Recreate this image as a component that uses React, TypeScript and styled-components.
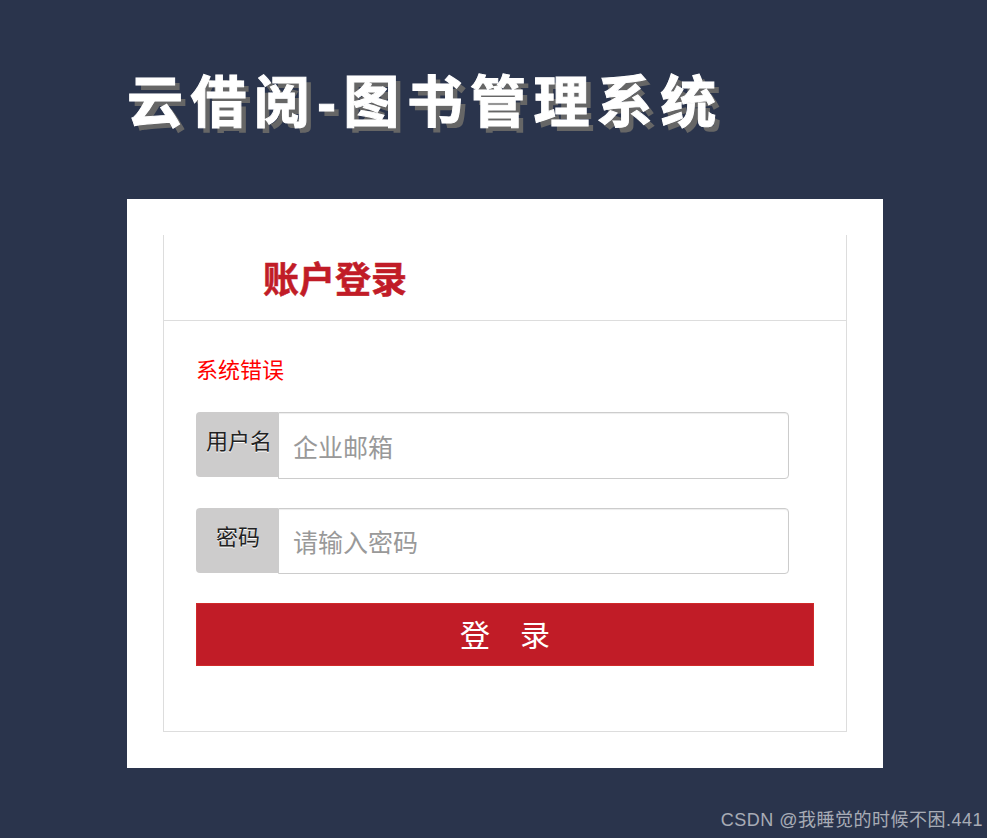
import React from "react";
import styled, { createGlobalStyle } from "styled-components";

const cjk = `"Liberation Sans", "Noto Sans CJK SC", sans-serif`;

const GlobalStyle = createGlobalStyle`
  html, body {
    margin: 0;
    padding: 0;
    background: #2a344c;
  }
  * {
    box-sizing: border-box;
  }
`;

const Page = styled.div`
  position: relative;
  width: 987px;
  height: 838px;
  padding: 68px 104px 0 127px;
  background: #2a344c;
  font-family: ${cjk};
  overflow: hidden;
`;

const Title = styled.h1`
  margin: 0 0 62px;
  height: 69px;
  font-size: 56px;
  line-height: 69px;
  font-weight: 700;
  letter-spacing: 7.4px;
  white-space: nowrap;
  color: #fff;
  -webkit-text-stroke: 1px #fff;
  text-shadow: 5px 5px 0 #666;
`;

const Card = styled.div`
  width: 756px;
  height: 569px;
  padding: 36px;
  background: #fff;
`;

const Panel = styled.div`
  height: 497px;
  border: 1px solid #ddd;
  border-top: none;
`;

const PanelHeader = styled.div`
  height: 86px;
  padding: 25px 0 0 99px;
  border-bottom: 1px solid #ddd;
`;

const PanelTitle = styled.h2`
  margin: 0;
  font-size: 36px;
  line-height: 42px;
  font-weight: 700;
  color: #c11c27;
  -webkit-text-stroke: 0.5px #c11c27;
`;

const Form = styled.form`
  padding: 34px 32px 0;
`;

const ErrorText = styled.div`
  height: 32px;
  margin-bottom: 25px;
  font-size: 22px;
  line-height: 32px;
  color: #f00;
`;

const Field = styled.div<{ $height: number; $gap: number }>`
  display: flex;
  width: 593px;
  height: ${(p) => p.$height}px;
  margin-bottom: ${(p) => p.$gap}px;
`;

const Addon = styled.span<{ $indent: number }>`
  width: 82px;
  height: 65px;
  padding: 12px 0 0 ${(p) => p.$indent}px;
  background: #cdcccc;
  border-radius: 4px 0 0 4px;
  font-size: 22px;
  line-height: 36px;
  color: #222;
  text-shadow: 0 1px 0 #fff;
  white-space: nowrap;
`;

const Input = styled.input`
  flex: 1;
  min-width: 0;
  height: 100%;
  padding: 5px 14px 0;
  background: #fff;
  border: 1px solid #ccc;
  border-radius: 0 4px 4px 0;
  box-shadow: inset 0 1px 1px rgba(0, 0, 0, 0.075);
  font-family: ${cjk};
  font-size: 25px;
  color: #555;
  outline: none;

  &::placeholder {
    color: #999;
    opacity: 1;
  }
`;

const SubmitButton = styled.button`
  display: block;
  width: 618px;
  height: 63px;
  padding: 0 0 4px;
  background: #c11c27;
  border: 1px solid #d02a2a;
  font-family: ${cjk};
  font-size: 30px;
  color: #fff;
  white-space: pre;
`;

const Watermark = styled.div`
  position: absolute;
  right: 4px;
  bottom: 5px;
  font-size: 18px;
  line-height: 26px;
  letter-spacing: 0.5px;
  color: rgba(255, 255, 255, 0.6);
  white-space: nowrap;
`;

export default function App() {
  return (
    <Page>
      <GlobalStyle />
      <Title>云借阅-图书管理系统</Title>
      <Card>
        <Panel>
          <PanelHeader>
            <PanelTitle>账户登录</PanelTitle>
          </PanelHeader>
          <Form onSubmit={(e) => e.preventDefault()}>
            <ErrorText>系统错误</ErrorText>
            <Field $height={67} $gap={29}>
              <Addon $indent={10}>用户名</Addon>
              <Input placeholder="企业邮箱" />
            </Field>
            <Field $height={66} $gap={29}>
              <Addon $indent={20}>密码</Addon>
              <Input placeholder="请输入密码" />
            </Field>
            <SubmitButton type="submit">登　录</SubmitButton>
          </Form>
        </Panel>
      </Card>
      <Watermark>CSDN @我睡觉的时候不困.441</Watermark>
    </Page>
  );
}
